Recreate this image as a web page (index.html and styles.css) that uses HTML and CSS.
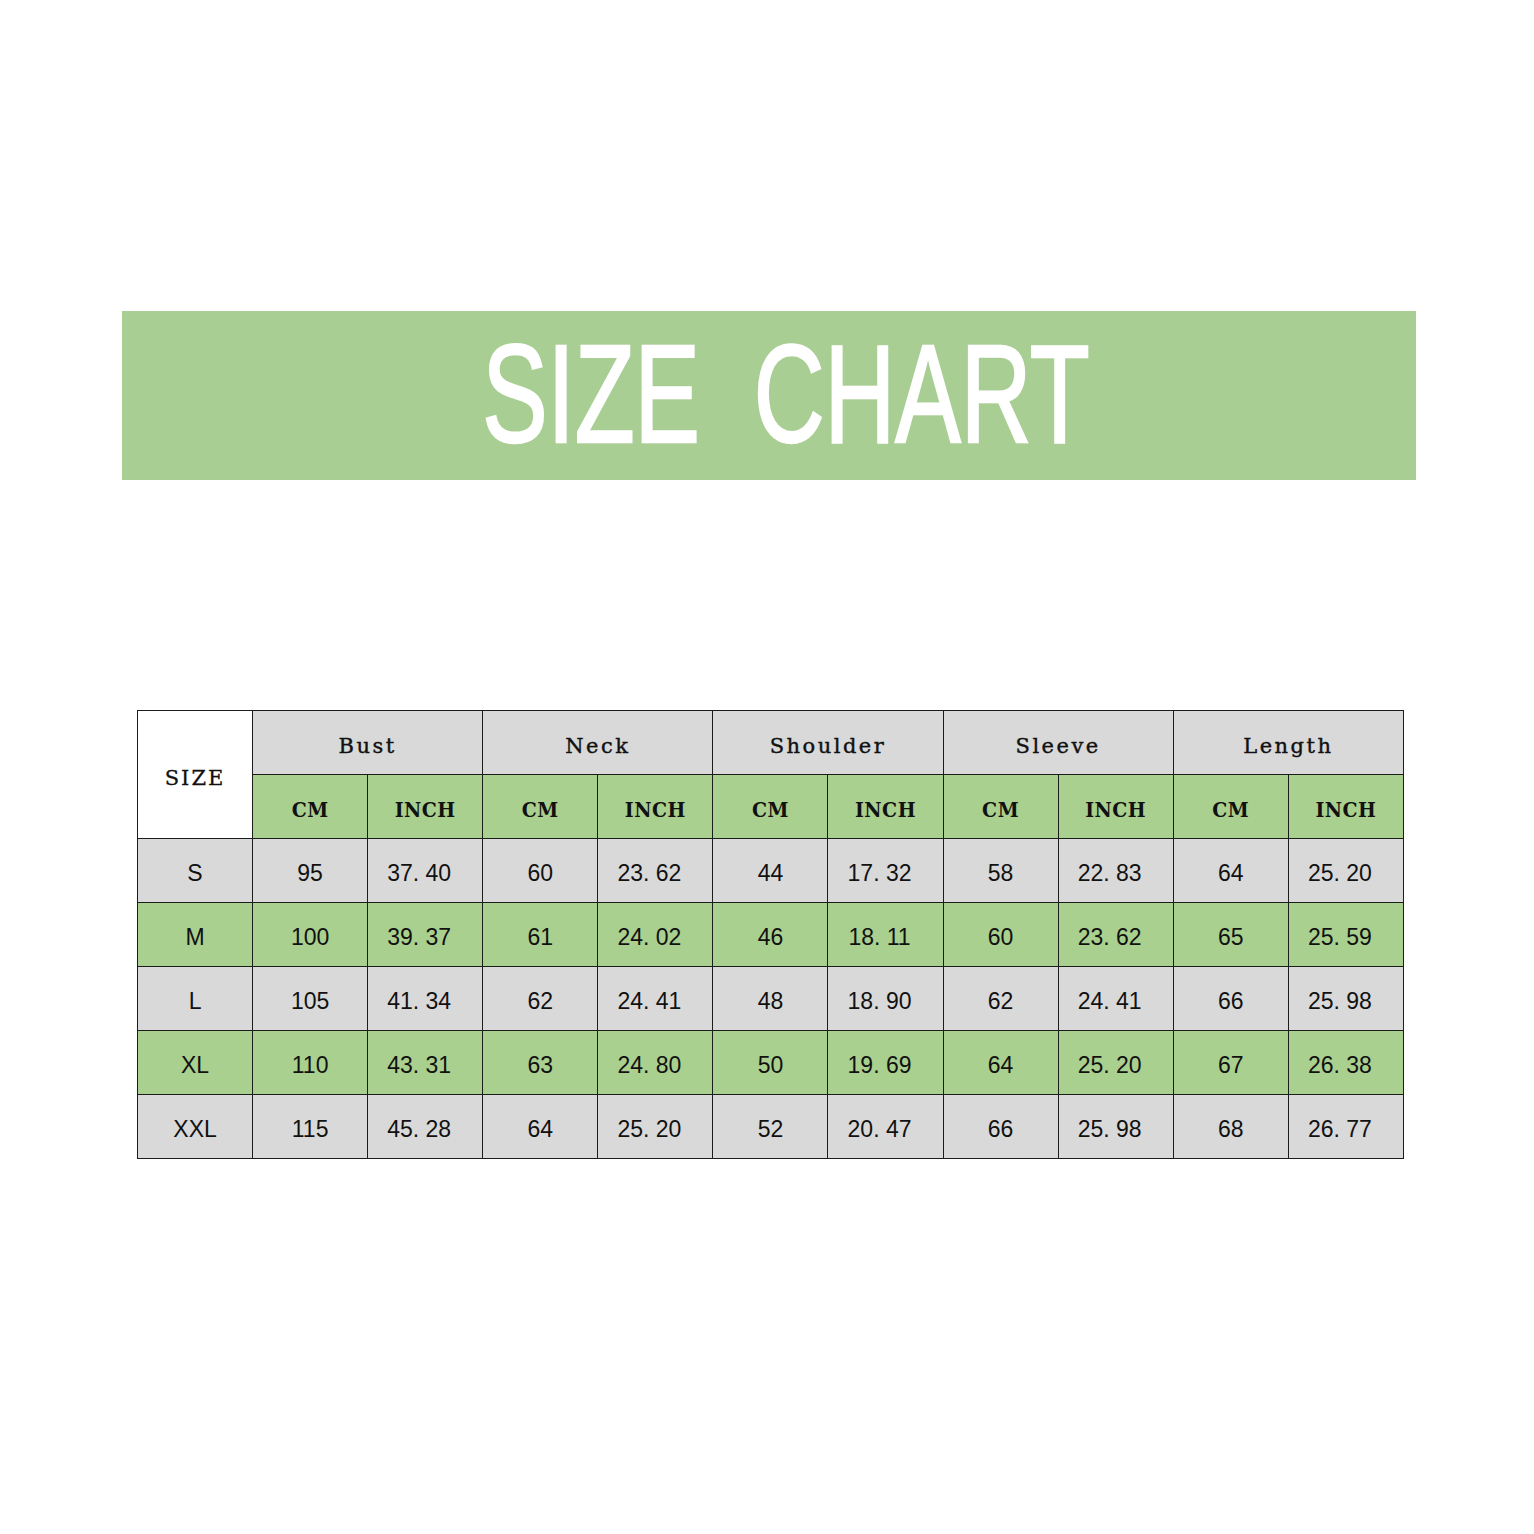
FILE: index.html
```html
<!DOCTYPE html>
<html>
<head>
<meta charset="utf-8">
<link rel="stylesheet" href="styles.css">
</head>
<body>
<div class="page">
  <div class="banner"><span class="banner-text">SIZE CHART</span></div>
  <table class="chart">
    <colgroup>
      <col class="c"><col class="c"><col class="c"><col class="c"><col class="c"><col class="c"><col class="c"><col class="c"><col class="c"><col class="c"><col class="c">
    </colgroup>
    <tr class="head">
      <th rowspan="2" class="size-h">SIZE</th>
      <th colspan="2" class="grp">Bust</th>
      <th colspan="2" class="grp">Neck</th>
      <th colspan="2" class="grp">Shoulder</th>
      <th colspan="2" class="grp">Sleeve</th>
      <th colspan="2" class="grp">Length</th>
    </tr>
    <tr class="units">
      <th>CM</th><th>INCH</th><th>CM</th><th>INCH</th><th>CM</th><th>INCH</th><th>CM</th><th>INCH</th><th>CM</th><th>INCH</th>
    </tr>
    <tr class="gray">
      <td class="lbl">S</td><td>95</td><td class="in">37. 40</td><td>60</td><td class="in">23. 62</td><td>44</td><td class="in">17. 32</td><td>58</td><td class="in">22. 83</td><td>64</td><td class="in">25. 20</td>
    </tr>
    <tr class="green">
      <td class="lbl">M</td><td>100</td><td class="in">39. 37</td><td>61</td><td class="in">24. 02</td><td>46</td><td class="in">18. 11</td><td>60</td><td class="in">23. 62</td><td>65</td><td class="in">25. 59</td>
    </tr>
    <tr class="gray">
      <td class="lbl">L</td><td>105</td><td class="in">41. 34</td><td>62</td><td class="in">24. 41</td><td>48</td><td class="in">18. 90</td><td>62</td><td class="in">24. 41</td><td>66</td><td class="in">25. 98</td>
    </tr>
    <tr class="green">
      <td class="lbl">XL</td><td>110</td><td class="in">43. 31</td><td>63</td><td class="in">24. 80</td><td>50</td><td class="in">19. 69</td><td>64</td><td class="in">25. 20</td><td>67</td><td class="in">26. 38</td>
    </tr>
    <tr class="gray">
      <td class="lbl">XXL</td><td>115</td><td class="in">45. 28</td><td>64</td><td class="in">25. 20</td><td>52</td><td class="in">20. 47</td><td>66</td><td class="in">25. 98</td><td>68</td><td class="in">26. 77</td>
    </tr>
  </table>
</div>
</body>
</html>
```
FILE: styles.css
```css
html, body {
  margin: 0;
  padding: 0;
  background: #ffffff;
}
.page {
  width: 1534px;
  height: 1534px;
  display: flex;
  flex-direction: column;
  align-items: flex-start;
}
.banner {
  margin-top: 311px;
  margin-left: 122px;
  width: 1294px;
  height: 169px;
  background: #a9ce93;
  display: flex;
  align-items: center;
  justify-content: center;
}
.banner-text {
  display: inline-block;
  font-family: "Liberation Sans", Arial, sans-serif;
  font-size: 140px;
  line-height: 1;
  color: #ffffff;
  -webkit-text-stroke: 2.5px #ffffff;
  word-spacing: 38px;
  transform: scaleX(0.70);
  margin-top: -4px;
  margin-left: 34px;
  white-space: nowrap;
}
.chart {
  margin-top: 230px;
  margin-left: 137px;
  border-collapse: collapse;
  table-layout: fixed;
  width: 1267px;
}
.chart .c {
  width: 115px;
}
.chart th, .chart td {
  border: 1.5px solid #1c1c1c;
  height: 58px;
  padding: 5px 0 0 0;
  text-align: center;
  vertical-align: middle;
  color: #111111;
}
.chart th {
  font-family: "DejaVu Serif", "Liberation Serif", serif;
  font-size: 21px;
}
.chart .size-h {
  background: #ffffff;
  font-weight: normal;
  letter-spacing: 2px;
  -webkit-text-stroke: 0.3px #111111;
  padding-top: 6px;
}
.chart .grp {
  background: #d9d9d9;
  font-weight: normal;
  letter-spacing: 2.5px;
  -webkit-text-stroke: 0.4px #111111;
  padding-top: 6px;
  height: 57px;
}
.chart .units th {
  background: #a9d08e;
  font-family: "DejaVu Serif Condensed", "DejaVu Serif", serif;
  font-stretch: condensed;
  font-weight: bold;
  font-size: 21px;
  letter-spacing: 0.5px;
}
.chart td {
  font-family: "Liberation Sans", Arial, sans-serif;
  font-size: 23px;
}
.chart td.in {
  padding-right: 12px;
}
.chart .gray td {
  background: #d9d9d9;
}
.chart .green td {
  background: #a9d08e;
}
```
